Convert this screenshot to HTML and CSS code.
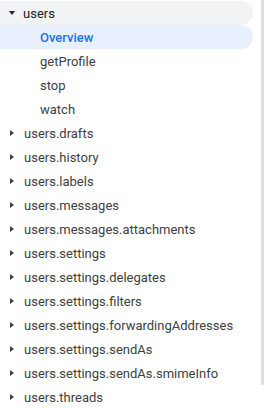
FILE: index.html
```html
<!DOCTYPE html>
<html>
<head>
    <meta name="viewport" content="width=device-width, initial-scale=1.0">
    <link rel="stylesheet" href="styles.css">
    <title>users</title>
</head>
<body>
    <div class="nav">
        <ul class="tree">
            <li class="item open"><span class="arrow down"></span>users</li>
            <li class="item child current">Overview</li>
            <li class="item child">getProfile</li>
            <li class="item child">stop</li>
            <li class="item child">watch</li>
            <li class="item"><span class="arrow"></span>users.drafts</li>
            <li class="item"><span class="arrow"></span>users.history</li>
            <li class="item"><span class="arrow"></span>users.labels</li>
            <li class="item"><span class="arrow"></span>users.messages</li>
            <li class="item"><span class="arrow"></span>users.messages.attachments</li>
            <li class="item"><span class="arrow"></span>users.settings</li>
            <li class="item"><span class="arrow"></span>users.settings.delegates</li>
            <li class="item"><span class="arrow"></span>users.settings.filters</li>
            <li class="item"><span class="arrow"></span>users.settings.forwardingAddresses</li>
            <li class="item"><span class="arrow"></span>users.settings.sendAs</li>
            <li class="item"><span class="arrow"></span>users.settings.sendAs.smimeInfo</li>
            <li class="item"><span class="arrow"></span>users.threads</li>
        </ul>
        <div class="scrollbar"></div>
    </div>
</body>
</html>
```
FILE: styles.css
```css
* {
    box-sizing: border-box;
}

html, body {
    margin: 0;
    padding: 0;
    background: #ffffff;
}

body {
    font-family: Roboto, "Liberation Sans", sans-serif;
    font-size: 13px;
    color: #3c4043;
    overflow: hidden;
}

.nav {
    display: flex;
    padding-top: 1px;
}

.tree {
    list-style-type: none;
    margin: 0;
    padding: 0;
    width: 253px;
}

.item {
    display: flex;
    align-items: center;
    height: 24px;
    padding-left: 9px;
    border-radius: 0 12px 12px 0;
    white-space: nowrap;
}

.item.child {
    padding-left: 40px;
}

.item.open {
    background-color: #f1f3f4;
    color: #202124;
}

.item.current {
    background-color: #e8f0fe;
    color: #1a73e8;
    font-weight: 500;
}

.arrow {
    width: 0;
    height: 0;
    margin-right: 10px;
    margin-left: 1px;
    border-top: 3.5px solid transparent;
    border-bottom: 3.5px solid transparent;
    border-left: 4px solid #3c4043;
}

.arrow.down {
    margin-left: 0;
    margin-right: 8px;
    border-left: 3.5px solid transparent;
    border-right: 3.5px solid transparent;
    border-top: 4px solid #202124;
    border-bottom: 0;
}

.scrollbar {
    width: 3px;
    height: 385px;
    margin-left: 8px;
    margin-top: -1px;
    background-color: #e0e0e0;
}
```
